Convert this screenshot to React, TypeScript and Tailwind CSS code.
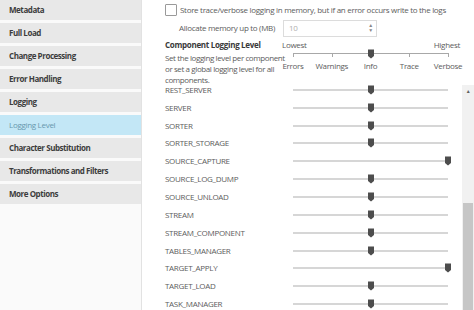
const navItems = [
  'Metadata',
  'Full Load',
  'Change Processing',
  'Error Handling',
  'Logging',
  'Logging Level',
  'Character Substitution',
  'Transformations and Filters',
  'More Options',
];

const components = [
  { name: 'REST_SERVER', level: 2 },
  { name: 'SERVER', level: 2 },
  { name: 'SORTER', level: 2 },
  { name: 'SORTER_STORAGE', level: 2 },
  { name: 'SOURCE_CAPTURE', level: 4 },
  { name: 'SOURCE_LOG_DUMP', level: 2 },
  { name: 'SOURCE_UNLOAD', level: 2 },
  { name: 'STREAM', level: 2 },
  { name: 'STREAM_COMPONENT', level: 2 },
  { name: 'TABLES_MANAGER', level: 2 },
  { name: 'TARGET_APPLY', level: 4 },
  { name: 'TARGET_LOAD', level: 2 },
  { name: 'TASK_MANAGER', level: 2 },
];

const levels = ['Errors', 'Warnings', 'Info', 'Trace', 'Verbose'];

function Thumb() {
  return (
    <svg width="7" height="10" viewBox="0 0 7 10" className="block">
      <path d="M0.5 0.5 H6.5 V7 L3.5 9.5 L0.5 7 Z" fill="#4d4d4d" />
    </svg>
  );
}

function LevelSlider({ level }: { level: number }) {
  return (
    <div className="relative h-[10px] w-[155px]">
      <div className="absolute left-0 right-0 top-[4px] h-[2px] bg-[#d6d6d6]" />
      <div
        className="absolute top-0 -translate-x-1/2"
        style={{ left: `${(level / 4) * 100}%` }}
      >
        <Thumb />
      </div>
    </div>
  );
}

export default function App() {
  return (
    <div
      className="flex h-[310px] w-[474px] overflow-hidden bg-white text-[8px] tracking-[-0.3px] text-[#5c5c5c]"
      style={{ fontFamily: '"Open Sans", "Noto Sans", sans-serif' }}
    >
      <div className="flex w-[142px] shrink-0 flex-col gap-[3px] border-r border-[#e2e2e2] bg-[#fafafa]">
        {navItems.map((item) => {
          const active = item === 'Logging Level';
          return (
            <div
              key={item}
              className={`flex h-[20px] items-center pl-[9px] ${
                active
                  ? 'bg-[#c3e7f6] text-[#6797ad]'
                  : 'bg-[#e8e8e8] font-bold tracking-[-0.45px] text-[#3d3d3d]'
              }`}
            >
              {item}
            </div>
          );
        })}
      </div>

      <div className="flex flex-1 flex-col">
        <div className="flex h-[20px] shrink-0 items-center pl-[23px]">
          <div className="h-[12px] w-[12px] rounded-[1px] border border-[#9a9a9a] bg-white" />
          <span className="ml-[2px] pl-[1px]">
            Store trace/verbose logging in memory, but if an error occurs write to the logs
          </span>
        </div>

        <div className="flex h-[16px] shrink-0 items-center pl-[37px]">
          <span className="w-[104px]">Allocate memory up to (MB)</span>
          <div className="flex h-[17px] w-[94px] items-center justify-between border border-[#dcdcdc] pl-[5px] pr-[3px] text-[#b0b0b0]">
            <span>10</span>
            <span className="flex flex-col text-[5px] leading-[5px] text-[#888]">
              <span>▲</span>
              <span>▼</span>
            </span>
          </div>
        </div>

        <div className="mt-[2px] flex shrink-0 pl-[23px]">
          <div className="w-[117px]">
            <div className="font-bold leading-[14px] text-[#3a3a3a]">Component Logging Level</div>
            <div className="whitespace-nowrap leading-[11px] tracking-[-0.4px]">
              Set the logging level per component
              <br />
              or set a global logging level for all
              <br />
              components.
            </div>
          </div>
          <div className="flex w-[180px] flex-col">
            <div className="flex justify-between pr-[2px] leading-[14px]">
              <span>Lowest</span>
              <span>Highest</span>
            </div>
            <div className="relative ml-[11px] mt-[-2px] h-[10px] w-[155px]">
              <div className="absolute left-0 right-0 top-[3px] h-[1px] bg-[#a8a8a8]" />
              {levels.map((l, i) => (
                <div
                  key={l}
                  className="absolute top-[3px] h-[4px] w-[1px] bg-[#a8a8a8]"
                  style={{ left: `${(i / 4) * 100}%` }}
                />
              ))}
              <div className="absolute top-[-1px] -translate-x-1/2" style={{ left: '50%' }}>
                <Thumb />
              </div>
            </div>
            <div className="relative ml-[11px] h-[12px] w-[155px]">
              {levels.map((l, i) => (
                <span
                  key={l}
                  className="absolute top-0 -translate-x-1/2 leading-[12px]"
                  style={{ left: `${(i / 4) * 100}%` }}
                >
                  {l}
                </span>
              ))}
            </div>
          </div>
        </div>

        <div className="flex min-h-0 flex-1 overflow-hidden">
          <div className="mt-[-4px] flex flex-1 flex-col pl-[23px]">
            {components.map((c) => (
              <div key={c.name} className="flex h-[17.85px] shrink-0 items-center">
                <span className="w-[128px]">{c.name}</span>
                <LevelSlider level={c.level} />
              </div>
            ))}
          </div>
          <div className="flex w-[12px] shrink-0 flex-col bg-[#f1f1f1]">
            <div className="flex h-[14px] items-center justify-center text-[5px] text-[#606060]">▲</div>
            <div className="flex-1" />
            <div className="mx-[1px] h-[107px] bg-[#c6c6c6]" />
          </div>
        </div>
      </div>
    </div>
  );
}
